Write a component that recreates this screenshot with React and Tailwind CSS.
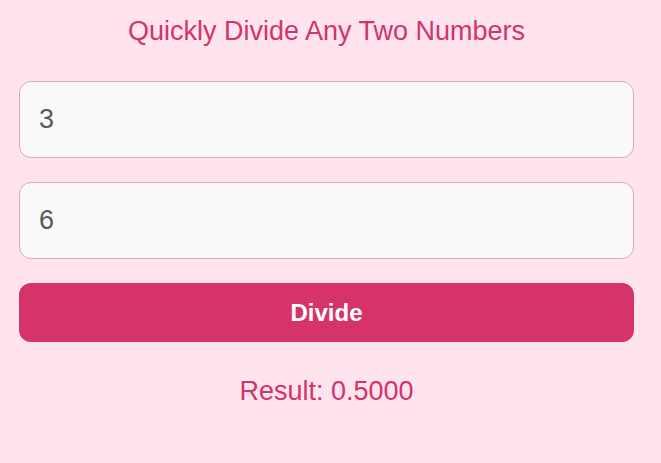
import React, { useState } from "react";

const App = () => {
    const [a, setA] = useState("3");
    const [b, setB] = useState("6");
    const [result, setResult] = useState("0.5000");

    const divide = () => {
        const x = parseFloat(a);
        const y = parseFloat(b);
        if (isNaN(x) || isNaN(y) || y === 0) {
            setResult("Error");
            return;
        }
        setResult((x / y).toFixed(4));
    };

    return (
        <div className="min-h-[463px] bg-[#ffe4f0] font-['Liberation_Sans',Arial,sans-serif]">
            <div className="ml-[19px] w-[615px] pt-[15px] flex flex-col">
                <h1 className="text-center text-[27px] leading-[32px] text-[#d3346a]">Quickly Divide Any Two Numbers</h1>
                <input
                    type="number"
                    value={a}
                    onChange={(e) => setA(e.target.value)}
                    className="mt-[34px] h-[77px] px-[19px] rounded-[12px] border border-[#d7a9bb] bg-[#f9f9f9] text-[27px] text-[#5a5a5a] outline-none"
                />
                <input
                    type="number"
                    value={b}
                    onChange={(e) => setB(e.target.value)}
                    className="mt-[24px] h-[77px] px-[19px] rounded-[12px] border border-[#d7a9bb] bg-[#f9f9f9] text-[27px] text-[#5a5a5a] outline-none"
                />
                <button
                    onClick={divide}
                    className="mt-[24px] h-[59px] rounded-[12px] bg-[#d63369] text-white text-[24px] font-bold"
                >
                    Divide
                </button>
                <p className="mt-[33px] text-center text-[27px] leading-[32px] text-[#d3346a]">Result: {result}</p>
            </div>
        </div>
    );
};

export default App;
